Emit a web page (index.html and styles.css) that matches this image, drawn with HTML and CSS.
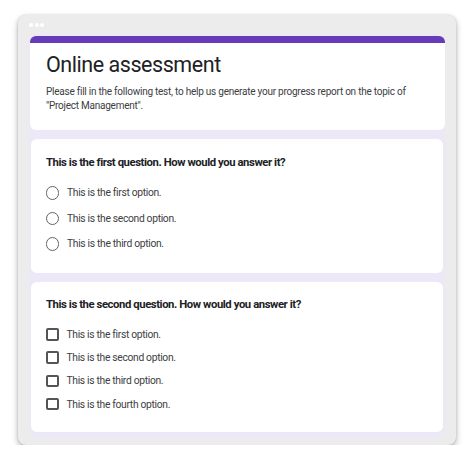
FILE: index.html
```html
<!DOCTYPE html>
<html lang="en">
<head>
<meta charset="utf-8">
<title>Online assessment</title>
<link rel="stylesheet" href="styles.css">
</head>
<body>
<div class="window">
  <div class="titlebar">
    <span class="dot"></span><span class="dot"></span><span class="dot"></span>
  </div>
  <div class="column">
    <section class="card header">
      <h1 class="title">Online assessment</h1>
      <p class="desc">Please fill in the following test, to help us generate your progress report on the topic of "Project Management".</p>
    </section>
    <section class="card q radio-q">
      <h2 class="question">This is the first question. How would you answer it?</h2>
      <ul class="options">
        <li class="option"><span class="radio"></span>This is the first option.</li>
        <li class="option"><span class="radio"></span>This is the second option.</li>
        <li class="option"><span class="radio"></span>This is the third option.</li>
      </ul>
    </section>
    <section class="card q check-q">
      <h2 class="question">This is the second question. How would you answer it?</h2>
      <ul class="options">
        <li class="option"><span class="check"></span>This is the first option.</li>
        <li class="option"><span class="check"></span>This is the second option.</li>
        <li class="option"><span class="check"></span>This is the third option.</li>
        <li class="option"><span class="check"></span>This is the fourth option.</li>
      </ul>
    </section>
  </div>
</div>
</body>
</html>
```

FILE: styles.css
```css
* { box-sizing: border-box; }
html, body { margin: 0; padding: 0; background: #ffffff; }
body { font-family: Roboto, "Liberation Sans", sans-serif; }

.window {
  margin: 15px 0 0 18px;
  width: 438px;
  height: 430px;
  padding: 0 11px 7px 11px;
  background: #ececec;
  border-radius: 8px;
  box-shadow: 0 3px 6px rgba(0,0,0,0.3), 0 0 2px rgba(0,0,0,0.15);
  display: flex;
  flex-direction: column;
}

.titlebar {
  height: 19px;
  display: flex;
  align-items: center;
  gap: 1.5px;
  padding-left: 0;
}
.dot {
  width: 4px;
  height: 4px;
  border-radius: 50%;
  background: #ffffff;
}

.column {
  flex: 1;
  background: #ece8f7;
  border-radius: 8px;
  padding: 2px 2px 6px 2px;
  display: flex;
  flex-direction: column;
  gap: 9px;
}

.card {
  background: #ffffff;
  border-radius: 6px;
  padding: 0 15px;
}

.header {
  border-top: 7px solid #673ab7;
  margin: 0 -1.5px 0 -1.5px;
  padding: 9px 16.5px 18px 16.5px;
  height: 94px;
}
.title {
  margin: 0;
  font-size: 21.5px;
  line-height: 26px;
  font-weight: 400;
  letter-spacing: -0.45px;
  color: #202124;
}
.desc {
  margin: 7px 0 0 0;
  font-size: 10px;
  line-height: 13.5px;
  letter-spacing: -0.24px;
  color: #3c4043;
}

.question {
  margin: 0;
  font-size: 11.3px;
  line-height: 18px;
  font-weight: 700;
  letter-spacing: -0.42px;
  color: #202124;
}
.options {
  list-style: none;
  margin: 8.7px 0 0 0;
  padding: 0;
}
.option {
  display: flex;
  align-items: center;
  font-size: 10.3px;
  letter-spacing: -0.32px;
  color: #3c4043;
}
.radio-q { padding-top: 14.5px; height: 134px; }
.radio-q .option { height: 25.5px; gap: 8px; }
.check-q { padding-top: 14px; height: 150px; }
.check-q .option { height: 23.3px; gap: 8px; }

.radio {
  width: 13.5px;
  height: 13.5px;
  border: 1.5px solid #5f6368;
  border-radius: 50%;
  margin-left: -0.5px;
  flex: none;
}
.check {
  width: 12.5px;
  height: 12.5px;
  border: 2px solid #555555;
  border-radius: 2px;
  flex: none;
}
```
